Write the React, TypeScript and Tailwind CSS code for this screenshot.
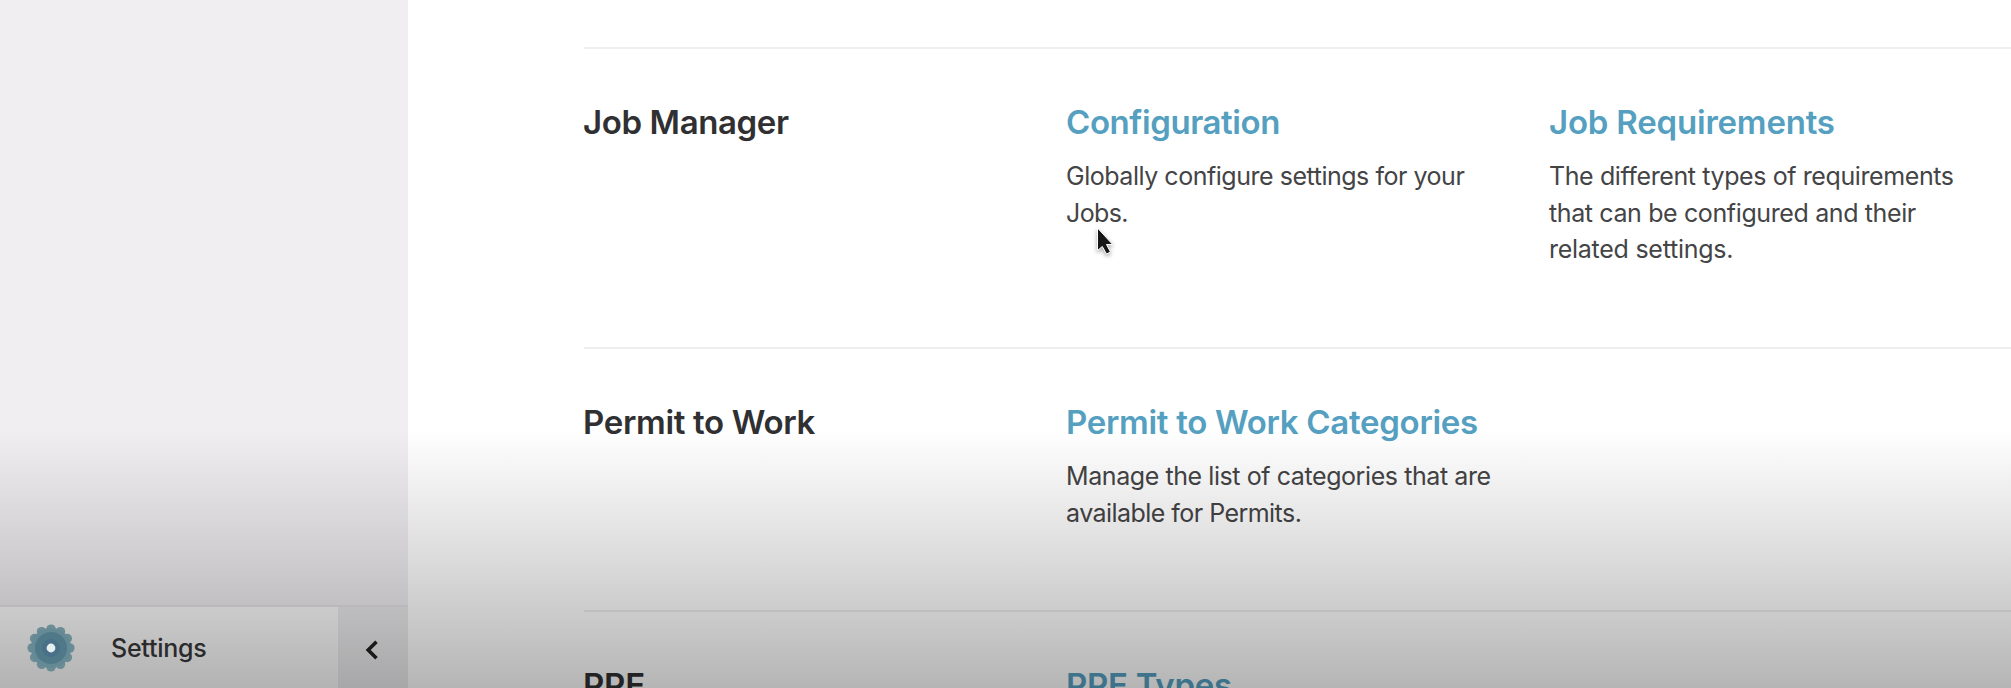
import { Fragment } from "react";

type Item = { title: string; lines: string[]; titleClass: string; lineClasses: string[] };
type Section = { name: string; nameClass: string; height: string; items: Item[] };

const sections: Section[] = [
  {
    name: "Job Manager",
    nameClass: "tracking-[-0.38px]",
    height: "h-[300px]",
    items: [
      {
        title: "Configuration",
        lines: ["Globally configure settings for your", "Jobs."],
        titleClass: "tracking-[-0.42px]",
        lineClasses: ["tracking-[-0.47px]", "tracking-[-0.6px]"],
      },
      {
        title: "Job Requirements",
        lines: ["The different types of requirements", "that can be configured and their", "related settings."],
        titleClass: "tracking-[-0.2px]",
        lineClasses: ["tracking-[-0.4px]", "tracking-[-0.38px]", "tracking-[-0.26px]"],
      },
    ],
  },
  {
    name: "Permit to Work",
    nameClass: "tracking-[-0.32px]",
    height: "h-[263px]",
    items: [
      {
        title: "Permit to Work Categories",
        lines: ["Manage the list of categories that are", "available for Permits."],
        titleClass: "tracking-[-0.3px]",
        lineClasses: ["tracking-[-0.42px]", "tracking-[-0.54px]"],
      },
    ],
  },
  {
    name: "PPE",
    nameClass: "tracking-[-0.2px]",
    height: "h-[263px]",
    items: [{ title: "PPE Types", lines: [], titleClass: "tracking-[-0.25px]", lineClasses: [] }],
  },
];

function Flower() {
  const petals = Array.from({ length: 12 }, (_, i) => (i * Math.PI) / 6);
  return (
    <svg viewBox="-24 -24 48 48" className="relative z-10 h-12 w-12 shrink-0">
      {petals.map((a) => (
        <circle key={a} cx={18.8 * Math.cos(a)} cy={18.8 * Math.sin(a)} r="4.8" fill="#6b8c95" />
      ))}
      <circle r="20" fill="#658a96" />
      <circle r="16" fill="#4f7889" />
      <circle r="9" fill="#4a7089" />
      <circle r="4.4" fill="#e6eeee" />
    </svg>
  );
}

function Sidebar() {
  return (
    <aside className="flex w-[408px] shrink-0 flex-col bg-[#f0eef1]">
      <div className="h-[605px] shrink-0" />
      <div className="flex h-[83px] border-t-2 border-[#e6e5e8]">
        <div className="flex w-[338px] items-center bg-[#fcfcfc] pl-[27px]">
          <Flower />
          <span className="ml-9 text-[25px] leading-8 font-medium tracking-[-0.25px] text-[#38383a]">Settings</span>
        </div>
        <div className="flex flex-1 items-center bg-[#ecebed] pl-[27px] pt-1">
          <svg viewBox="0 0 14 20" className="h-5 w-[14px]" fill="none" stroke="#222" strokeWidth="3.6">
            <path d="M11.5 1.8 3.2 10l8.3 8.2" />
          </svg>
        </div>
      </div>
    </aside>
  );
}

export default function App() {
  return (
    <div className="relative flex h-[688px] w-[2011px] overflow-hidden bg-white font-['Inter',sans-serif]">
      <Sidebar />
      <main className="min-w-0 flex-1 pt-[47px] pl-[176px]">
        {sections.map((s) => (
          <section key={s.name} className={`${s.height} grid grid-cols-[483px_483px_1fr] border-t-2 border-[#eeeeef] pt-[53px]`}>
            <h2 className={`${s.nameClass} -ml-px text-[33px] leading-10 font-semibold whitespace-nowrap text-[#303032]`}>{s.name}</h2>
            {s.items.map((item) => (
              <div key={item.title} className="-ml-px whitespace-nowrap">
                <h3 className={`${item.titleClass} text-[33px] leading-10 font-semibold text-[#559fc0]`}>{item.title}</h3>
                <p className="mt-4 text-[25px] leading-[36.5px] text-[#444446]">
                  {item.lines.map((line, i) => (
                    <Fragment key={line}>
                      <span className={item.lineClasses[i]}>{line}</span>
                      <br />
                    </Fragment>
                  ))}
                </p>
              </div>
            ))}
          </section>
        ))}
      </main>
      <div className="pointer-events-none absolute inset-x-0 bottom-0 h-[258px] bg-linear-to-b from-black/0 via-black/14 via-50% to-black/29" />
      <svg viewBox="0 0 24 36" className="absolute top-[226px] left-[1093px] h-9 w-6 overflow-visible drop-shadow-[0_2px_2px_rgba(0,0,0,0.35)]">
        <path d="M4.5 2v22.5l4.8-4 4.2 7.5 4-2-4-7.5h6.2z" fill="#161616" stroke="#fff" strokeWidth="1" />
      </svg>
    </div>
  );
}
